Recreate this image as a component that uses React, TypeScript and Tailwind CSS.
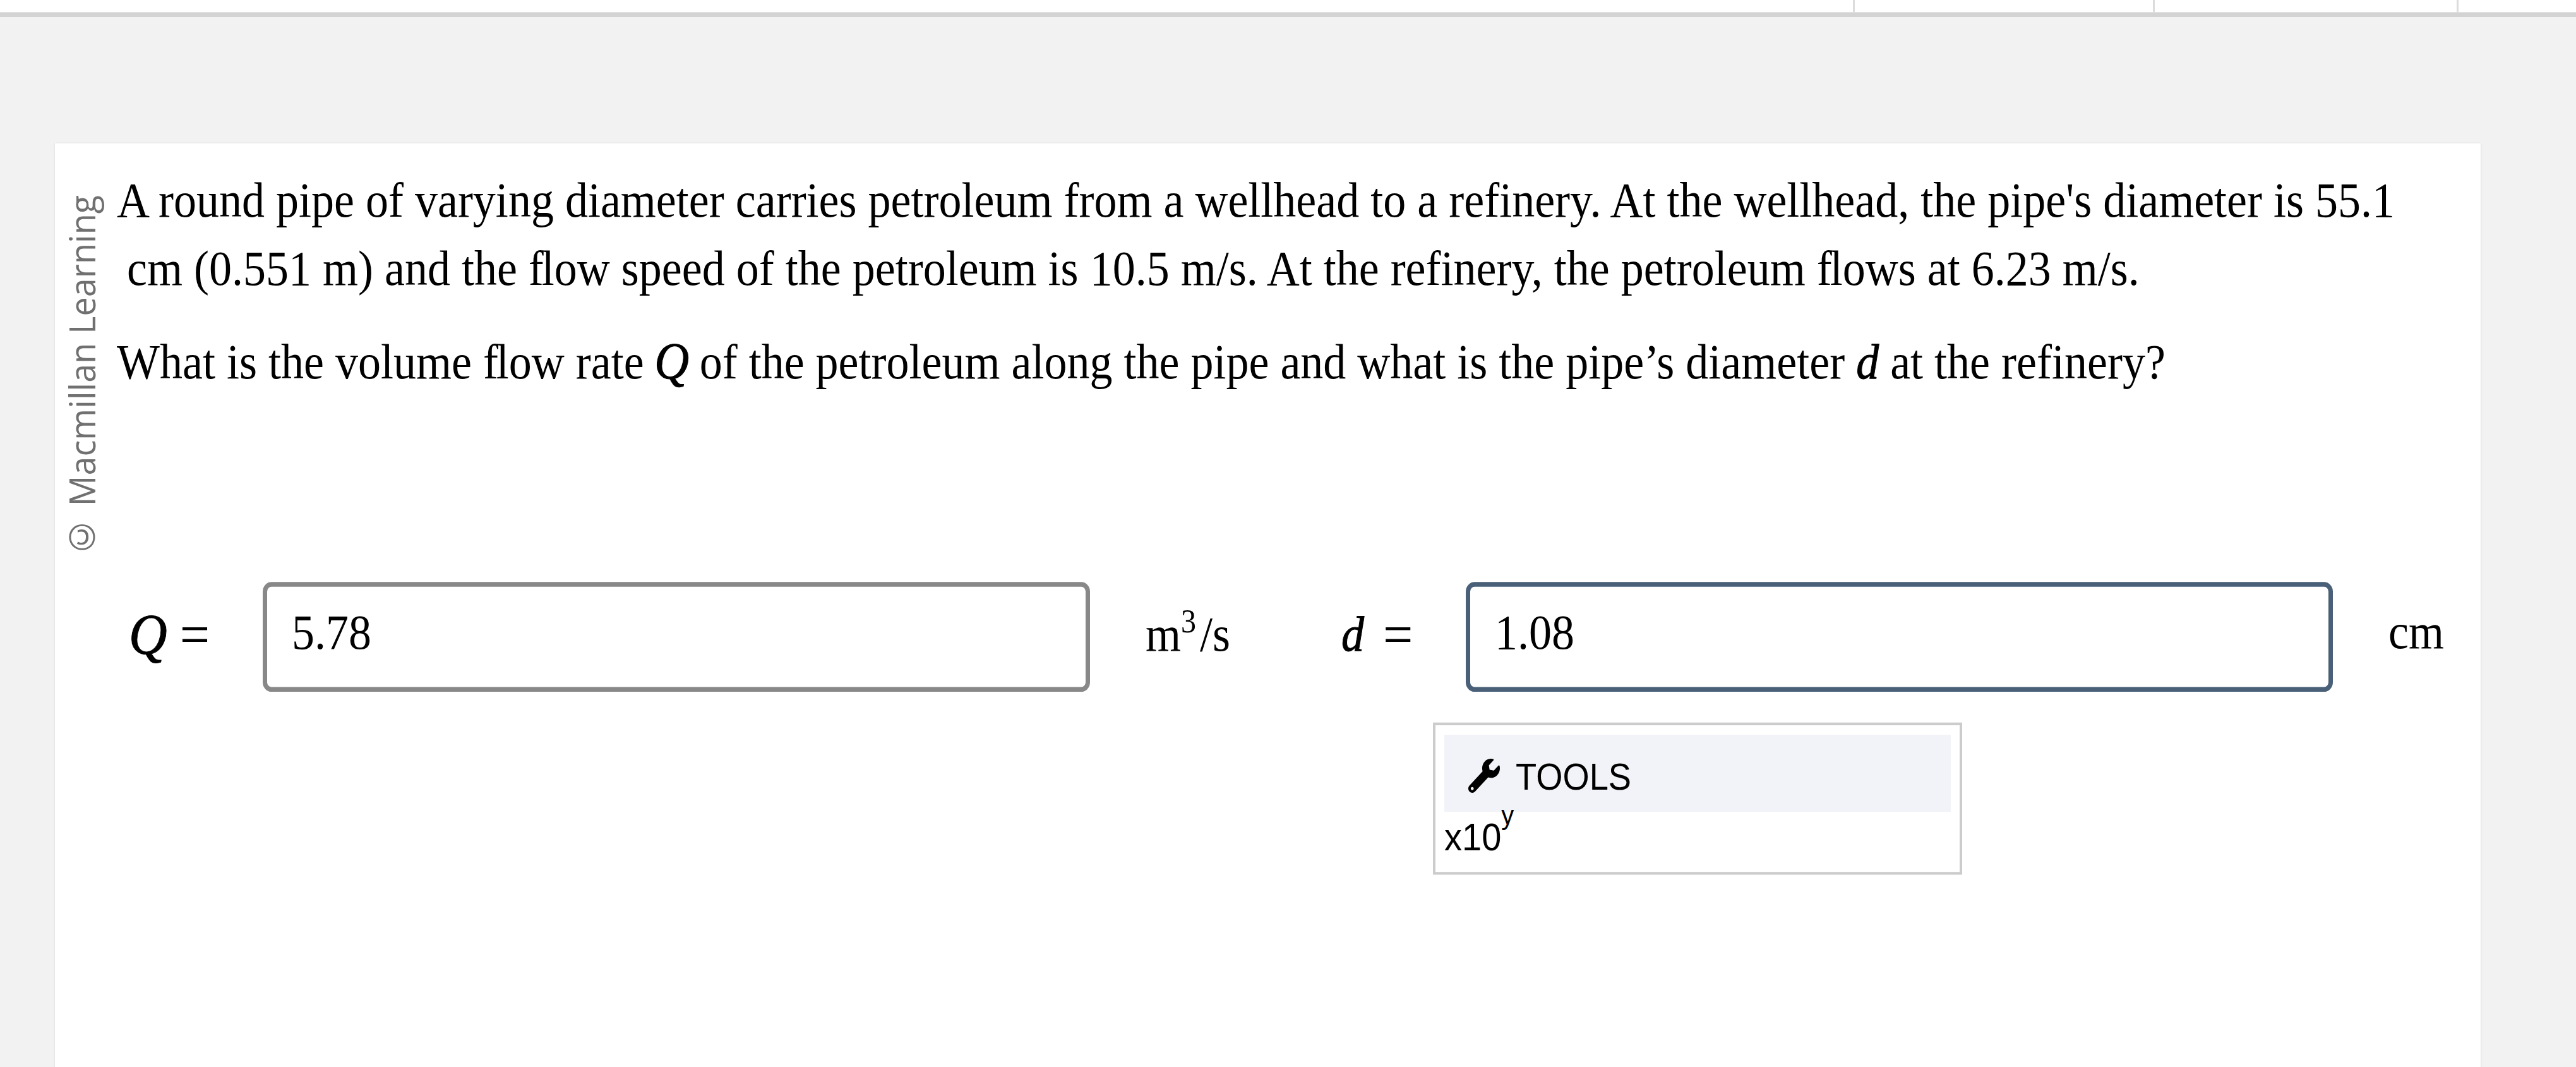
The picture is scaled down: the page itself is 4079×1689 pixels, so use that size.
import { FaWrench } from "react-icons/fa";

const serif = "font-['Liberation_Serif','Times_New_Roman',serif]";

function Fl() {
  return <span className="tracking-[-3px]">f</span>;
}

export default function App() {
  return (
    <div className="h-[1689px] w-[4079px] overflow-hidden bg-[#f2f2f2]">
      <div className="h-[1564px] origin-top scale-y-[1.08]">
        {/* top tabs strip */}
        <div className="flex h-[17.6px] justify-end bg-white">
          <div className="w-[475px] border-l-[3px] border-[#dcdcdc]" />
          <div className="w-[481px] border-l-[3px] border-[#dcdcdc]" />
          <div className="w-[189px] border-l-[3px] border-[#dcdcdc]" />
        </div>
        <div className="h-[7.4px] bg-[#d3d3d3]" />

        {/* card */}
        <div className={`relative ml-[87px] mt-[185px] h-[1400px] w-[3841px] bg-white text-[72px] leading-[100px] text-black shadow-[0_0_3px_rgba(0,0,0,0.12)] ${serif}`}>
          <div className="absolute left-[13px] top-[76px] rotate-180 scale-x-[1.12] font-['Open_Sans',sans-serif] text-[50px] leading-[60px] text-[#707070] [writing-mode:vertical-rl]">
            © Macmillan Learning
          </div>

          <div className="pl-[98px] pt-[34px]">
            <p>
              A round pipe of varying diameter carries petroleum from a wellhead to a refinery. At the wellhead, the pipe's diameter is 55.1
              <br />
              <span className="ml-[-2px]">
                &nbsp;cm (0.551 m) and the <Fl />low speed of the petroleum is 10.5 m/s. At the refinery, the petroleum <Fl />lows at 6.23 m/s.
              </span>
            </p>
            <p className="mt-[37px]">
              What is the volume <Fl />low rate <i className="mx-[-1.5px] text-[76px] leading-none [-webkit-text-stroke:1px_black]">Q</i> of the petroleum along the pipe and what is the pipe’s diameter <i className="[-webkit-text-stroke:1px_black]">d</i> at the refinery?
            </p>
          </div>

          {/* answer row */}
          <div className="ml-[117px] mt-[272px] flex h-[161px] items-center">
            <div className="flex w-[212px] items-center gap-[20px] pb-[6px]">
              <i className="text-[84px] [-webkit-text-stroke:1px_black]">Q</i>
              <span className="text-[84px]">=</span>
            </div>
            <div className="flex h-full w-[1310px] items-center rounded-[14px] border-[7px] border-[#888888] pb-[12px] pl-[39px]">5.78</div>
            <div className="ml-[88px] w-[310px] pb-[6px]">
              m<sup className="-top-[27px] text-[48px]">3</sup>
              <span className="ml-[6px]">/s</span>
            </div>
            <div className="flex w-[197px] items-center gap-[30px] pb-[6px]">
              <i className="[-webkit-text-stroke:1px_black]">d</i>
              <span className="text-[84px]">=</span>
            </div>
            <div className="flex h-full w-[1373px] items-center rounded-[14px] border-[7px] border-[#4a6078] pb-[12px] pl-[39px]">1.08</div>
            <div className="ml-[88px] pb-[14px]">cm</div>
          </div>

          {/* tools popover */}
          <div className="ml-[2182px] mt-[45px] h-[223px] w-[838px] border-[4px] border-[#cccccc] px-[14px] pt-[14px] font-['Liberation_Sans',Arial,sans-serif] text-[54.3px]">
            <div className="flex h-[113px] items-center bg-[#f2f3f8] pl-[36px] pt-[12px]">
              <FaWrench className="h-[50px] w-[54px] -translate-y-[2px] text-black" />
              <span className="ml-[23px] leading-none">TOOLS</span>
            </div>
            <div className="mt-[2px] text-[56px] leading-[70px]">
              x10<sup className="-top-[38px] text-[40px]">y</sup>
            </div>
          </div>
        </div>
      </div>
    </div>
  );
}
